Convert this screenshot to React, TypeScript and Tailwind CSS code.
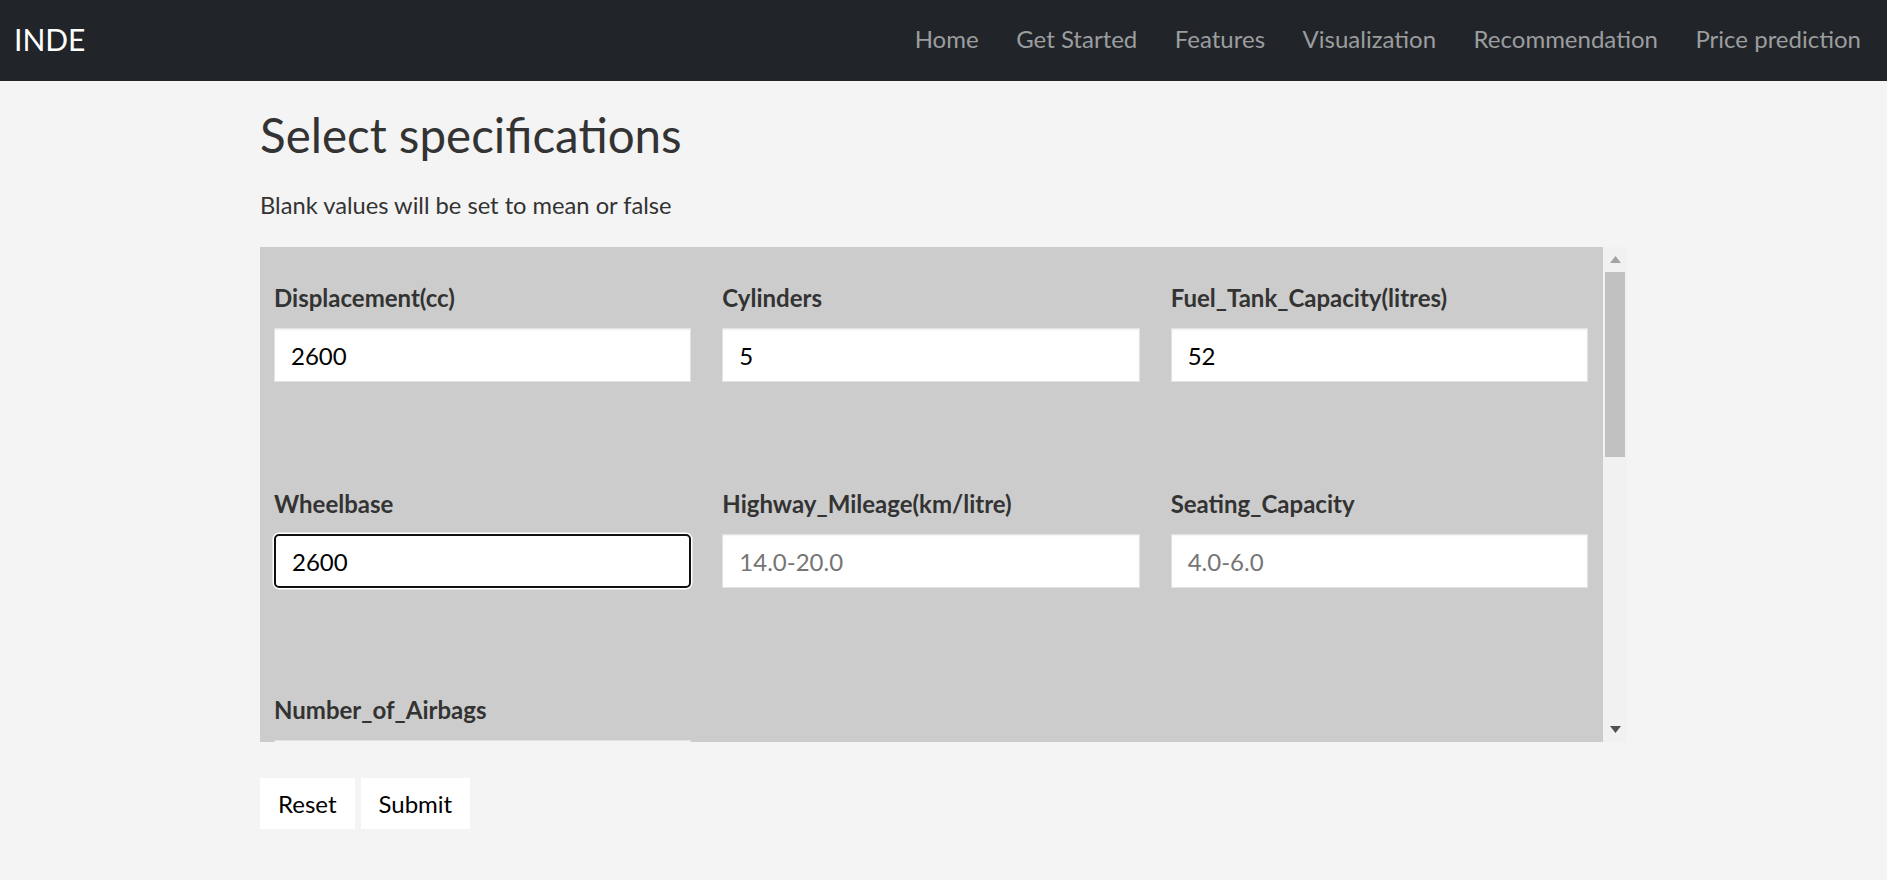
import React from "react";

type Field = { label: string; value?: string; placeholder?: string; focused?: boolean };

const fields: Field[] = [
  { label: "Displacement(cc)", value: "2600" },
  { label: "Cylinders", value: "5" },
  { label: "Fuel_Tank_Capacity(litres)", value: "52" },
  { label: "Wheelbase", value: "2600", focused: true },
  { label: "Highway_Mileage(km/litre)", placeholder: "14.0-20.0" },
  { label: "Seating_Capacity", placeholder: "4.0-6.0" },
  { label: "Number_of_Airbags", placeholder: "2.0-6.0" },
];

const links = ["Home", "Get Started", "Features", "Visualization", "Recommendation", "Price prediction"];

function Navbar() {
  return (
    <nav className="h-[81px] bg-[#212529] flex items-center justify-between pl-[14px] pr-[26px]">
      <a href="#" className="text-white text-[30px] leading-none pb-[4px]">
        INDE
      </a>
      <ul className="flex items-center gap-[37.5px]">
        {links.map((l) => (
          <li key={l}>
            <a href="#" className="text-[#9b9d9f] text-[24px] leading-none">
              {l}
            </a>
          </li>
        ))}
      </ul>
    </nav>
  );
}

function SpecInput({ field }: { field: Field }) {
  const base =
    "w-full h-[54px] bg-white px-[16px] text-[24px] text-black placeholder:text-[#757575] outline-none";
  const look = field.focused
    ? "border-2 border-[#101010] rounded-[5px] shadow-[0_0_0_1.5px_#ffffff]"
    : "border border-[#e3e3e3] shadow-[inset_0_1px_2px_rgba(0,0,0,0.06)]";
  return (
    <div>
      <label className="block text-[24px] leading-[36px] font-bold text-[#333333] mb-[12px]">
        {field.label}
      </label>
      <input
        type="text"
        defaultValue={field.value}
        placeholder={field.placeholder}
        className={`${base} ${look}`}
      />
    </div>
  );
}

// drawn scrollbar: the page is photographed without native scrollbars
function Scrollbar() {
  return (
    <div className="w-[24px] shrink-0 bg-[#f1f1f1] flex flex-col">
      <div className="h-[25px] flex items-center justify-center">
        <svg width="11" height="7" viewBox="0 0 11 7">
          <path d="M5.5 0 L11 7 L0 7 Z" fill="#a3a3a3" />
        </svg>
      </div>
      <div className="h-[185px] mx-[2px] bg-[#c1c1c1]" />
      <div className="flex-1" />
      <div className="h-[25px] flex items-center justify-center">
        <svg width="11" height="7" viewBox="0 0 11 7">
          <path d="M0 0 L11 0 L5.5 7 Z" fill="#505050" />
        </svg>
      </div>
    </div>
  );
}

export default function App() {
  return (
    <div className="min-h-[880px] bg-[#f4f4f4] font-['Lato','Open_Sans',sans-serif]">
      <Navbar />
      <main className="w-[1367px] mx-auto pb-10">
        <h1 className="text-[47.5px] leading-[58px] text-[#333333] pt-[25px] mb-[23px]">
          Select specifications
        </h1>
        <p className="text-[23.7px] leading-[36px] text-[#333333] mb-[24px]">
          Blank values will be set to mean or false
        </p>
        <form>
          <div className="h-[495px] flex">
            <div className="flex-1 overflow-hidden bg-[#cccccc]">
              <div className="grid grid-cols-3 gap-x-[31px] gap-y-[104px] pl-[14px] pr-[15px] pt-[33px] pb-[24px]">
                {fields.map((f) => (
                  <SpecInput key={f.label} field={f} />
                ))}
              </div>
            </div>
            <Scrollbar />
          </div>
          <div className="flex gap-[6px] mt-[36px]">
            <button type="reset" className="h-[51px] px-[18px] bg-white text-[24px] text-black">
              Reset
            </button>
            <button type="submit" className="h-[51px] px-[18px] bg-white text-[24px] text-black">
              Submit
            </button>
          </div>
        </form>
      </main>
    </div>
  );
}
